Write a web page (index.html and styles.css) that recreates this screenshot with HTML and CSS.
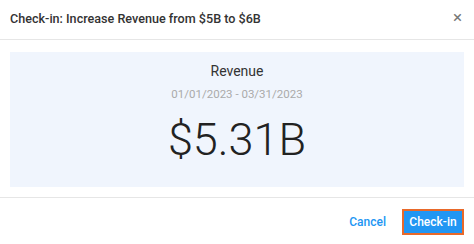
FILE: index.html
```html
<!DOCTYPE html>
<html lang="en">
<head>
    <meta charset="UTF-8">
    <meta name="viewport" content="width=device-width, initial-scale=1.0">
    <title>Check-in</title>
    <link rel="stylesheet" href="styles.css">
</head>
<body>
    <div class="dialog">
        <div class="dialog-header">
            <h2 class="dialog-title">Check-in: Increase Revenue from $5B to $6B</h2>
            <span class="close">&times;</span>
        </div>

        <div class="dialog-body">
            <div class="metric">
                <div class="metric-name">Revenue</div>
                <div class="metric-range">01/01/2023 - 03/31/2023</div>
                <div class="metric-value">$5.31B</div>
            </div>
        </div>

        <div class="dialog-footer">
            <button class="btn btn-link">Cancel</button>
            <button class="btn btn-primary">Check-in</button>
        </div>
    </div>
</body>
</html>
```

FILE: styles.css
```css
body {
    font-family: Roboto, "Liberation Sans", Arial, sans-serif;
    margin: 0;
    padding: 0;
    background-color: #fff;
    color: #333;
}

.dialog {
    width: 474px;
    height: 244px;
    display: flex;
    flex-direction: column;
}

.dialog-header {
    height: 40px;
    display: flex;
    align-items: center;
    justify-content: space-between;
    padding: 0 10px;
    border-bottom: 1px solid #e6e6e6;
    box-sizing: border-box;
}

.dialog-title {
    margin: 0;
    font-size: 12.6px;
    font-weight: 500;
    color: #333;
    padding-bottom: 3px;
}

.close {
    font-size: 17px;
    color: #777;
    line-height: 1;
    padding-bottom: 4px;
    margin-right: 2px;
    cursor: pointer;
}

.dialog-body {
    padding: 12px 10px 10px;
}

.metric {
    background-color: #f0f5fd;
    height: 135px;
    display: flex;
    flex-direction: column;
    align-items: center;
}

.metric-name {
    margin-top: 11px;
    font-size: 14px;
    color: #333;
}

.metric-range {
    margin-top: 8px;
    font-size: 11.5px;
    color: #aaa;
}

.metric-value {
    margin-top: 13px;
    font-size: 45px;
    font-weight: 300;
    color: #222;
    line-height: 52px;
}

.dialog-footer {
    border-top: 1px solid #e6e6e6;
    flex: 1;
    display: flex;
    justify-content: flex-end;
    align-items: center;
    gap: 16px;
    padding: 2px 10px 0;
}

.btn {
    font-family: inherit;
    font-size: 12px;
    font-weight: 500;
    border: none;
    cursor: pointer;
}

.btn-link {
    background: none;
    color: #2196f3;
    padding: 0;
}

.btn-primary {
    background-color: #2196f3;
    color: #fff;
    width: 62px;
    height: 26px;
    border: 2px solid #e8692a;
    padding: 0;
}
```
